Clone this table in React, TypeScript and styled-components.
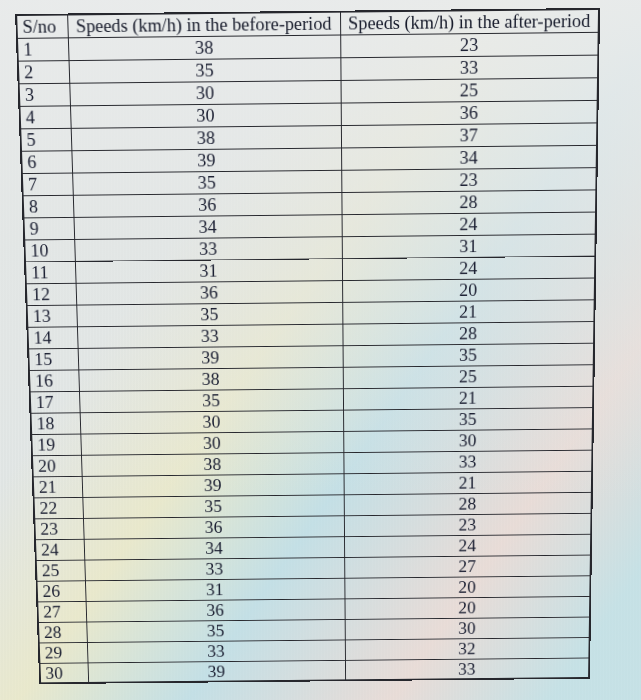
import React from "react";
import styled, { createGlobalStyle } from "styled-components";

const before = [38, 35, 30, 30, 38, 39, 35, 36, 34, 33, 31, 36, 35, 33, 39, 38, 35, 30, 30, 38, 39, 35, 36, 34, 33, 31, 36, 35, 33, 39];
const after = [23, 33, 25, 36, 37, 34, 23, 28, 24, 31, 24, 20, 21, 28, 35, 25, 21, 35, 30, 33, 21, 28, 23, 24, 27, 20, 20, 30, 32, 33];

const GlobalStyle = createGlobalStyle`
  html, body {
    margin: 0;
    padding: 0;
  }
  body {
    width: 641px;
    height: 700px;
    overflow: hidden;
    background-color: #dfe4e3;
    background-image:
      linear-gradient(180deg, rgba(233, 235, 235, 0.95) 0%, rgba(228, 231, 230, 0.6) 35%, rgba(214, 226, 226, 0) 72%),
      linear-gradient(125deg, rgba(190, 225, 230, 0) 30%, rgba(238, 234, 188, 0.6) 45%, rgba(180, 220, 230, 0.65) 60%, rgba(238, 212, 204, 0.55) 78%, rgba(180, 222, 230, 0.6) 92%),
      repeating-linear-gradient(90deg, rgba(255, 255, 255, 0.14) 0px, rgba(255, 255, 255, 0.14) 1px, rgba(0, 0, 0, 0) 1px, rgba(0, 0, 0, 0) 3px);
    font-family: "Liberation Serif", "Times New Roman", serif;
  }
`;

/* the sheet is photographed at a slight angle */
const Page = styled.div`
  padding: 11px 0 0 15px;
`;

const Table = styled.table`
  border-collapse: collapse;
  width: 583px;
  table-layout: fixed;
  color: #191d30;
  font-size: 18.3px;
  border: 2px solid #26272d;
  transform-origin: top center;
  transform: perspective(1000px) rotateX(-5deg) rotate(-0.6deg);
`;

const Row = styled.tr`
  height: 23px;
`;

const Cell = styled.td<{ $align?: "left" | "center" }>`
  border: 1.8px solid #26272d;
  padding: 1px 5px 0;
  line-height: 20px;
  white-space: nowrap;
  font-weight: normal;
  text-align: ${(p) => p.$align ?? "center"};
  vertical-align: middle;
`;

const HeadCell = styled(Cell).attrs({ as: "th" })`
  color: #151929;
`;

export default function App() {
  return (
    <>
      <GlobalStyle />
      <Page>
        <Table>
          <colgroup>
            <col style={{ width: 51 }} />
            <col style={{ width: 273 }} />
            <col style={{ width: 259 }} />
          </colgroup>
          <thead>
            <Row>
              <HeadCell $align="left">S/no</HeadCell>
              <HeadCell>Speeds (km/h) in the before-period</HeadCell>
              <HeadCell>Speeds (km/h) in the after-period</HeadCell>
            </Row>
          </thead>
          <tbody>
            {before.map((b, i) => (
              <Row key={i}>
                <Cell $align="left">{i + 1}</Cell>
                <Cell>{b}</Cell>
                <Cell>{after[i]}</Cell>
              </Row>
            ))}
          </tbody>
        </Table>
      </Page>
    </>
  );
}
